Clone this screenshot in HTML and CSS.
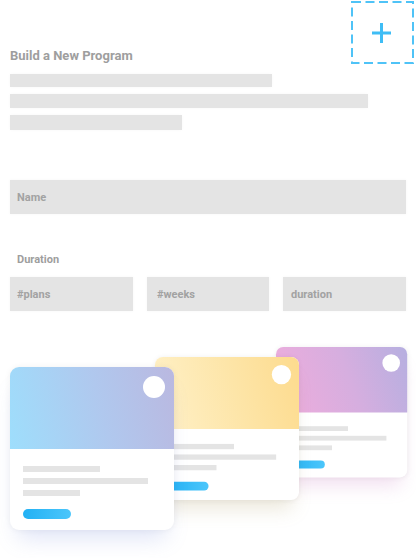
FILE: index.html
```html
<!DOCTYPE html>
<html>
<head>
<meta charset="utf-8">
<link rel="stylesheet" href="styles.css">
</head>
<body>
<div class="page">
  <div class="header">
    <h1 class="title">Build a New Program</h1>
    <div class="add-box">
      <svg width="66" height="66" viewBox="0 0 66 66">
        <rect x="2" y="2" width="61" height="61" fill="none" stroke="#4fc3f7" stroke-width="2" stroke-dasharray="9 4.5"/>
        <rect x="22" y="31.5" width="19" height="3" fill="#3fbdf5"/>
        <rect x="30" y="23" width="3" height="20" fill="#3fbdf5"/>
      </svg>
    </div>
  </div>
  <div class="desc">
    <div class="bar bar1"></div>
    <div class="bar bar2"></div>
    <div class="bar bar3"></div>
  </div>
  <div class="field field-name">Name</div>
  <div class="label">Duration</div>
  <div class="grid3">
    <div class="field">#plans</div>
    <div class="field">#weeks</div>
    <div class="field">duration</div>
  </div>
  <div class="stack">
    <div class="card card3">
      <div class="card-head"><span class="dot"></span></div>
      <div class="card-body">
        <div class="line l1"></div>
        <div class="line l2"></div>
        <div class="line l3"></div>
        <div class="btn"></div>
      </div>
    </div>
    <div class="card card2">
      <div class="card-head"><span class="dot"></span></div>
      <div class="card-body">
        <div class="line l1"></div>
        <div class="line l2"></div>
        <div class="line l3"></div>
        <div class="btn"></div>
      </div>
    </div>
    <div class="card card1">
      <div class="card-head"><span class="dot"></span></div>
      <div class="card-body">
        <div class="line l1"></div>
        <div class="line l2"></div>
        <div class="line l3"></div>
        <div class="btn"></div>
      </div>
    </div>
  </div>
</div>
</body>
</html>
```
FILE: styles.css
```css
* { box-sizing: border-box; }
html, body { margin: 0; padding: 0; background: #fff; }
body { font-family: Roboto, "Liberation Sans", sans-serif; color: #a0a0a0; width: 416px; height: 558px; overflow: hidden; }
.page { padding: 0 10px; }
.header { position: relative; display: flex; justify-content: space-between; align-items: flex-end; height: 66px; margin-right: -13px; margin-bottom: 8px; }
.title { margin: 0 0 2px 0; font-size: 13px; line-height: 16px; font-weight: 700; color: #9e9e9e; }
.add-box { align-self: flex-start; width: 66px; height: 66px; }
.add-box svg { display: block; margin-left: -3px; }
.desc { display: flex; flex-direction: column; gap: 7px; }
.bar { background: #e4e4e4; box-shadow: 0 0 3px rgba(0,0,0,0.03); }
.bar1 { width: 262px; height: 13px; }
.bar2 { width: 358px; height: 14px; }
.bar3 { width: 172px; height: 15px; }
.field { background: #e4e4e4; height: 34px; display: flex; align-items: center; padding-left: 7px; font-size: 11px; font-weight: 700; color: #a2a2a2; box-shadow: 0 0 3px rgba(0,0,0,0.04); }
.field-name { margin-top: 50px; }
.label { margin-top: 39px; font-size: 11px; font-weight: 700; color: #9e9e9e; padding-left: 7px; line-height: 14px; }
.grid3 { display: grid; grid-template-columns: 123px 122px 123px; gap: 14px; margin-top: 10px; }
.grid3 .field:nth-child(2) { padding-left: 10px; }
.grid3 .field:nth-child(3) { padding-left: 8px; }
.stack { position: relative; height: 205px; margin: 36px -10px 0; }
.card { position: absolute; width: 164px; height: 163px; border-radius: 9px; background: #fff; transform-origin: 0 0; }
.card-head { position: relative; height: 82px; border-radius: 9px 9px 0 0; }
.dot { position: absolute; left: 133px; top: 9px; width: 22px; height: 22px; border-radius: 50%; background: #fff; }
.card-body { padding: 17px 13px 0; }
.line { height: 6px; background: #e4e4e4; margin-bottom: 6px; }
.l1 { width: 77px; }
.l2 { width: 125px; }
.l3 { width: 57px; }
.btn { margin-top: 13px; width: 48px; height: 10px; border-radius: 5px; background: linear-gradient(90deg, #22b1f4, #4cc6fb); }
.card1 { left: 10px; top: 20px; z-index: 3; box-shadow: 0 16px 22px -8px rgba(110,130,220,0.22), 0 0 6px rgba(0,0,0,0.06); }
.card1 .card-head { background: linear-gradient(75deg, #9edefc 0%, #b0c8ee 55%, #bab8e0 100%); }
.card2 { left: 155px; top: 10px; transform: scale(0.878); z-index: 2; box-shadow: 0 18px 22px -8px rgba(170,150,90,0.22), 0 0 6px rgba(0,0,0,0.06); }
.card2 .card-head { background: linear-gradient(75deg, #fff1c9 0%, #fde5a8 55%, #fddb8e 100%); }
.card3 { left: 276px; top: 0; transform: scale(0.8); z-index: 1; box-shadow: 0 18px 22px -8px rgba(200,120,190,0.22), 0 0 6px rgba(0,0,0,0.06); }
.card3 .card-head { background: linear-gradient(70deg, #f0acdc 0%, #d6aedf 55%, #b6afe0 100%); }
```
